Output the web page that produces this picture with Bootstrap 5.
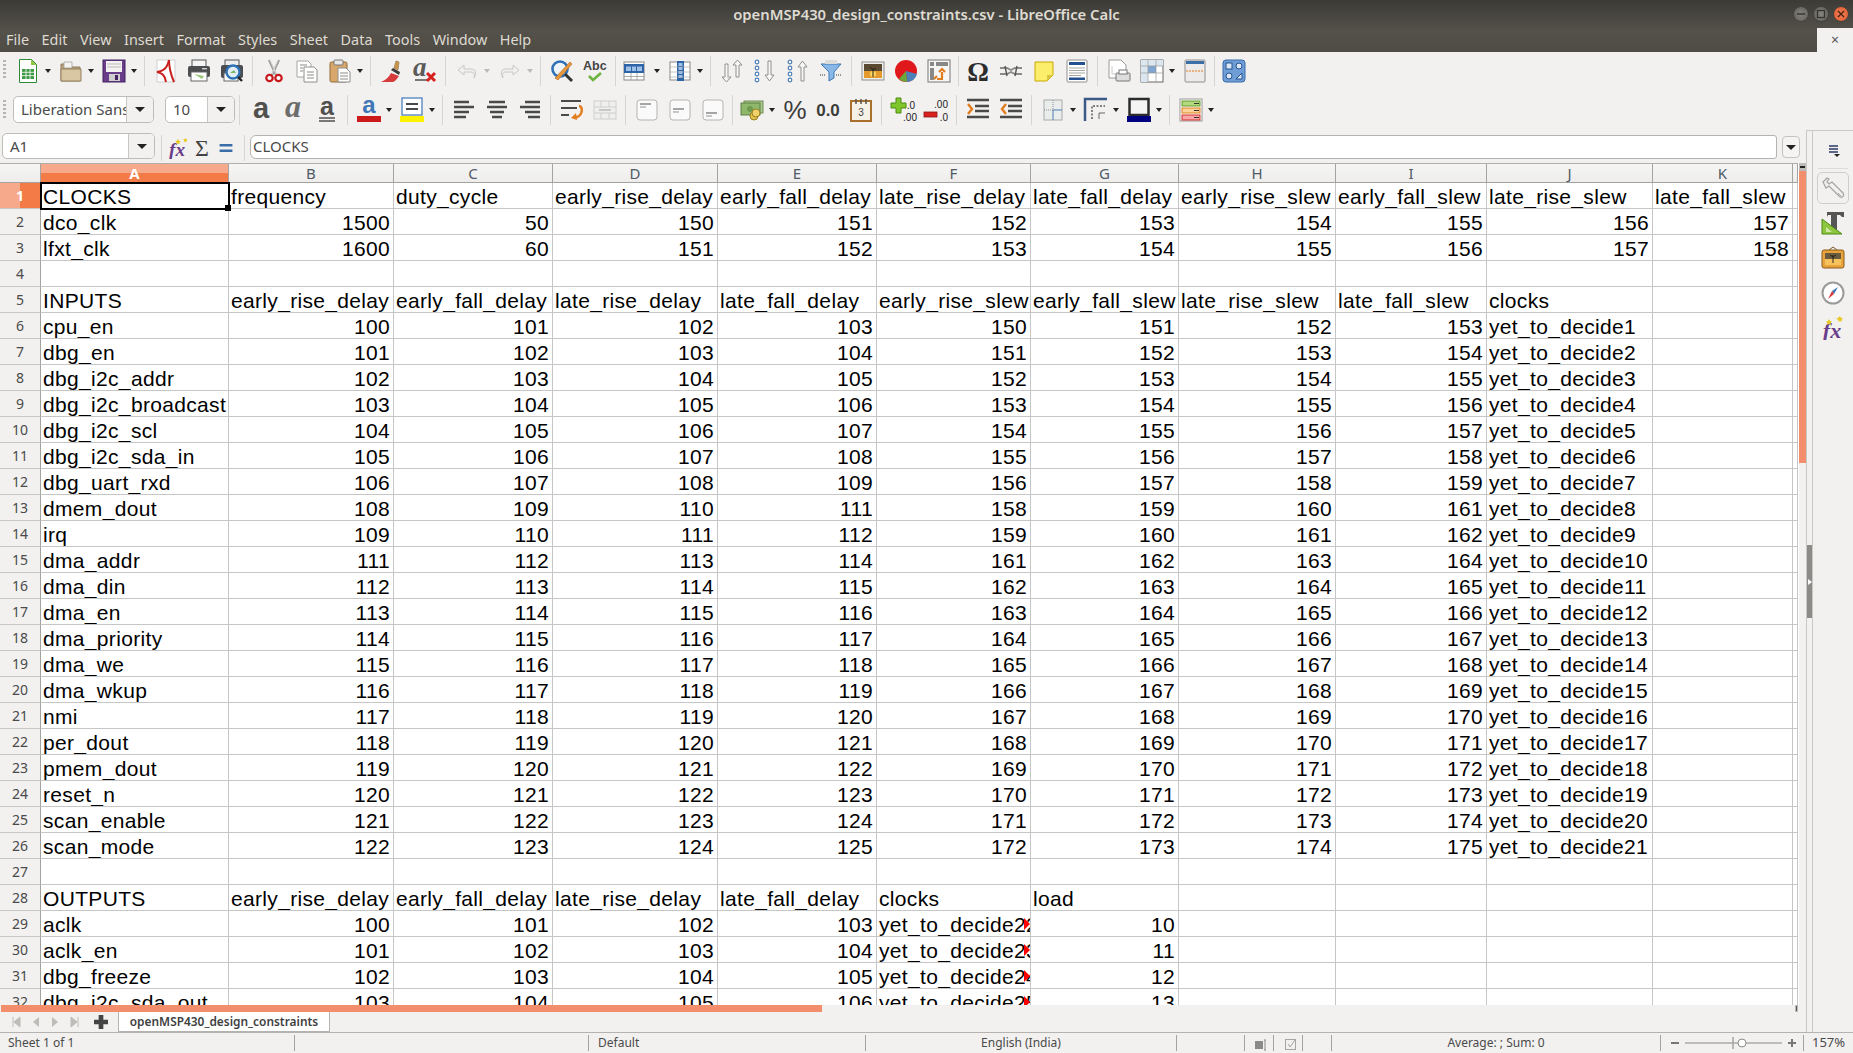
<!DOCTYPE html>
<html lang="en">
<head>
<meta charset="utf-8">
<title>openMSP430_design_constraints.csv - LibreOffice Calc</title>
<link href="https://cdn.jsdelivr.net/npm/bootstrap@5.3.0/dist/css/bootstrap.min.css" rel="stylesheet">
<style>
html,body{margin:0;height:100%;overflow:hidden;background:#f2f1f0;font-family:"Noto Sans",sans-serif}
.lo-app{width:1853px;height:1053px}
.lo-titlebar{height:52px;background:linear-gradient(#3c3b37,#54514a 60%,#4f4c45);position:relative;color:#dfdbd2}
.lo-title{font:600 14.8px/28px "Noto Sans",sans-serif;text-align:center}
.lo-winbtns{position:absolute;right:4px;top:6px;gap:4px}
.lo-wb{width:16px;height:16px;border-radius:50%;background:radial-gradient(#85837d,#5f5d58);border:1px solid #44423d}
.lo-wb.lo-close{background:radial-gradient(#f2825a,#e0562a)}
.lo-wb svg{display:block}
.lo-menu{height:24px;padding-left:6px;gap:12.6px;font-size:14.4px;line-height:24px;color:#dfdbd2}
.lo-menu span{white-space:nowrap}
.lo-docx{position:absolute;right:0;top:28px;width:36px;height:24px;background:#f2f1f0;color:#555;text-align:center;line-height:23px;font-size:14px}
.lo-tb1{height:37px;padding-left:11px}
.lo-tb2{height:41px}
.lo-grip{position:absolute;left:3px;width:3px;background:repeating-linear-gradient(#b5b5b2 0 2px,transparent 2px 4px)}
.lo-grip-a{top:8px;height:20px}
.lo-grip-b{top:48px;height:20px}
.lo-tbwrap{position:relative;height:78px}
.lo-b{width:33px;height:24px;flex:none;display:flex;align-items:center;justify-content:center}
.lo-b svg{width:24px;height:24px;display:block;overflow:visible}
.lo-a{width:10px;flex:none;display:flex;justify-content:center}
.lo-a::before{content:"";border:3.5px solid transparent;border-top:4px solid #222;border-bottom:0;margin-left:-2px}
.lo-a.lo-off::before{border-top-color:#bbb}
.lo-s{width:9px;height:30px;flex:none;position:relative}
.lo-s::before{content:"";position:absolute;left:4px;top:0;bottom:0;width:1px;background:#d6d5d2}
.lo-s.lo-n{width:6px}
.lo-s.lo-n::before{left:3px}
.lo-combo{height:27px;background:#fff;border:1px solid #bdbcb8;border-radius:5px;display:flex;flex:none;font-size:15px;color:#4a4a4a;line-height:25px;overflow:hidden}
.lo-combo .lo-txt{flex:1;padding-left:7px;white-space:nowrap;overflow:hidden}
.lo-combo .lo-dd{width:27px;background:#f2f1f0;border-left:1px solid #c8c7c3;display:flex;align-items:center;justify-content:center;flex:none}
.lo-combo .lo-dd::before,.lo-fbtn::before{content:"";border:5px solid transparent;border-top:5px solid #222;border-bottom:0}
.lo-font{width:141px;margin-left:13px;margin-right:11px}
.lo-size{width:70px}
.lo-main{height:902px}
.lo-left{width:1806px}
.lo-formula{height:33px}
.lo-name{width:153px;height:26px;margin:3px 0 0 2px}
.lo-name .lo-dd{width:26px}
.lo-fs{width:1px;height:26px;background:#d6d5d2;margin:5px 0 0 6px;flex:none}
.lo-fx{width:24px;height:24px;margin-top:6px;display:flex;align-items:center;justify-content:center;flex:none}
.lo-fx svg{width:22px;height:22px;display:block}
.lo-input{width:1527px;height:24px;margin:5px 0 0 5px;background:#fff;border:1px solid #b4b3af;border-radius:6px 3px 3px 6px;font-size:15px;line-height:21px;padding-left:2px;color:#4a4a4a;flex:none}
.lo-fbtn{width:18px;height:22px;margin:6px 0 0 5px;border:1px solid #c4c3bf;border-radius:4px;background:#f5f4f3;display:flex;align-items:center;justify-content:center;flex:none}
.lo-gridrow{height:849px}
.lo-gridwrap{width:1799px;height:842px;overflow:hidden;background:#fff}
.lo-sheet{table-layout:fixed;border-collapse:separate;border-spacing:0;width:1798px;font-family:"Liberation Sans",Arial,sans-serif;font-size:21px;letter-spacing:.33px;color:#000}
.lo-sheet td{height:26px;line-height:22px;padding:3px 2px 0;border-right:1px solid #c6c6c6;border-bottom:1px solid #c6c6c6;white-space:nowrap;overflow:hidden;position:relative;background:#fff}
.lo-sheet td.lo-r{text-align:right;padding-right:3px}
.lo-sheet thead th{height:20px;padding:0;background:linear-gradient(#f5f5f4,#eeedec);border-top:1px solid #b0afab;border-right:1px solid #a3a3a0;border-bottom:1px solid #a3a3a0;font:400 15px/18px "Noto Sans",sans-serif;letter-spacing:0;color:#4f5a66;text-align:center}
.lo-sheet tbody th{padding:0;background:#f2f1f0;border-right:1px solid #a3a3a0;border-bottom:1px solid #c6c6c6;font:400 14px/24px "Noto Sans",sans-serif;letter-spacing:0;color:#4a4a4a;text-align:center}
.lo-sheet thead th.lo-on{background:linear-gradient(#f6a98b 50%,#f27b48 50%);color:#fff;font-weight:700}
.lo-sheet tbody th.lo-on{background:linear-gradient(90deg,#f6a98b 50%,#f27b48 50%);color:#fff;font-weight:700}
.lo-sheet td.lo-cur{overflow:visible;outline:2px solid #000;outline-offset:-1px;z-index:2}
.lo-sheet td.lo-cur::after{content:"";position:absolute;right:-3px;bottom:-3px;width:6px;height:6px;background:#000;z-index:3}
.lo-sheet td.lo-ovf::after{content:"";position:absolute;right:0;top:7px;border:6px solid transparent;border-left:6px solid #f00;border-right:0}
.lo-vs{width:7px;flex:none}
.lo-vs-btn{height:8px;background:#bdbcb9;position:relative}
.lo-vs-btn::before{content:"";position:absolute;left:1px;right:1px;top:3px;height:2px;background:#222}
.lo-vs-thumb{height:292px;background:#f28e6b}
.lo-hs{height:7px;padding-left:1px;margin-top:-7px}
.lo-hs-thumb{width:821px;height:7px;background:#f28e6b}
.lo-hs-end{width:3px;height:7px;background:#555;margin-left:973px;border:1px solid #bbb}
.lo-tabs{height:20px}
.lo-nav{width:118px;padding-left:10px;align-items:center;flex:none}
.lo-nav svg{width:12px;height:12px;margin-right:7.5px;display:block;flex:none}
.lo-nav svg.lo-plus{width:14px;height:14px;margin-left:6px}
.lo-sheettab{width:212px;height:20px;background:#fff;border:1px solid #b4b3af;border-top:0;font:600 11.9px/18px "Noto Sans",sans-serif;color:#3f3f3f;text-align:center;white-space:nowrap;flex:none}
.lo-sash{width:7px;border-left:1px solid #c9c8c5;border-right:1px solid #c9c8c5;border-top:1px solid #c9c8c5;flex:none}
.lo-handle{height:73px;margin-top:414px;background:#8c8b87;display:flex;align-items:center;justify-content:center}
.lo-handle::before{content:"";border:3px solid transparent;border-left:4px solid #fff;border-right:0}
.lo-deck{width:40px;border-top:1px solid #c9c8c5;align-items:center;padding-top:13px;flex:none}
.lo-deck svg{display:block;width:24px;height:24px}
.lo-deck svg.lo-dk-menu{width:12px;height:14px;margin-left:1px}
.lo-dk-hr{width:30px;height:1px;background:#dcdbd8;margin:10px 0 3px}
.lo-dk-act{width:32px;height:32px;border:1px solid #cfcecb;border-radius:5px;display:flex;align-items:center;justify-content:center;margin-bottom:7px}
.lo-dk-i{height:35px;display:flex;align-items:flex-start;justify-content:center}
.lo-status{height:20px;border-top:1px solid #b4b3af;font-size:12px;color:#4a4a4a}
.lo-st{height:16px;margin-top:2px;border-right:1px solid #a3a3a0;flex:none;line-height:15px;white-space:nowrap;overflow:hidden}
.lo-w295{width:295px}.lo-w294{width:294px}.lo-w277{width:277px;padding-left:9px}.lo-w311{width:311px}.lo-w68{width:68px}
.lo-w29a{width:29px;padding:1px 0 0 9px}.lo-w29b{width:29px;padding:1px 0 0 11px}.lo-w329{width:329px}
.lo-slider{height:16px;margin-top:2px;padding-left:7px;flex:none;width:143px;border-right:1px solid #a3a3a0}
.lo-slider svg{display:block}
.lo-zoom{width:48px;padding-left:8px;font-size:13px;line-height:15px;margin-top:2px;height:16px}
</style>
</head>
<body>
<div class="lo-app d-flex flex-column">
<header class="lo-titlebar">
  <div class="lo-title">openMSP430_design_constraints.csv - LibreOffice Calc</div>
  <div class="lo-winbtns d-flex">
    <div class="lo-wb"><svg viewBox="0 0 14 14"><path d="M3 7h8" stroke="#33322e" stroke-width="1.4"/></svg></div>
    <div class="lo-wb"><svg viewBox="0 0 14 14"><rect x="3.5" y="3.5" width="7" height="7" fill="none" stroke="#33322e" stroke-width="1.2"/></svg></div>
    <div class="lo-wb lo-close"><svg viewBox="0 0 14 14"><path d="M4 4l6 6M10 4l-6 6" stroke="#4a2312" stroke-width="1.4"/></svg></div>
  </div>
  <nav class="lo-menu d-flex"><span>File</span><span>Edit</span><span>View</span><span>Insert</span><span>Format</span><span>Styles</span><span>Sheet</span><span>Data</span><span>Tools</span><span>Window</span><span>Help</span></nav>
  <div class="lo-docx">×</div>
</header>

<div class="lo-tbwrap">
<div class="lo-grip lo-grip-a"></div>
<div class="lo-grip lo-grip-b"></div>
<div class="lo-tb1 d-flex align-items-center">
  <div class="lo-b"><svg viewBox="0 0 24 24"><path d="M3.500.5h12l5 5v18h-17z" fill="#fff" stroke="#2f8a35"/><path d="M15 .5l5.500 5.500H15z" fill="#8cc63f"/><rect x="6" y="10" width="12" height="10" fill="#3f9a45"/><path d="M6 13.300h12M6 16.600h12M10 10v10M14 10v10" stroke="#fff" stroke-width=".8"/></svg></div><div class="lo-a"></div>
  <div class="lo-b"><svg viewBox="0 0 24 24"><path d="M2 5h8l2 3h9v14H2z" fill="#b9a27c" stroke="#8f7b5a"/><path d="M5 3h8v6H5z" fill="#f4f2ee" stroke="#9a9a96" stroke-width=".7"/><path d="M2 10h20v12H2z" fill="#d9c6a2" stroke="#93805f"/></svg></div><div class="lo-a"></div>
  <div class="lo-b"><svg viewBox="0 0 24 24"><rect x="1" y="1" width="22" height="22" fill="#6a3d8a" stroke="#432463"/><rect x="4" y="2" width="16" height="11" fill="#f3f2f0"/><path d="M5 5h14M5 8h14" stroke="#bbb"/><rect x="7" y="15" width="11" height="7" fill="#cfcdd0"/><rect x="13" y="16" width="3" height="5" fill="#432463"/></svg></div><div class="lo-a"></div>
  <div class="lo-s"></div>
  <div class="lo-b"><svg viewBox="0 0 24 24"><path d="M3 1h18v22H3z" fill="#fff" stroke="#cfcfcf"/><path d="M15 1C13 10 9 12 3 13c5 1 8 3 9 10" fill="none" stroke="#c8201f" stroke-width="2"/><path d="M15 1c0 8 2 15 5 22" fill="none" stroke="#c8201f" stroke-width="2"/></svg></div>
  <div class="lo-b"><svg viewBox="0 0 24 24"><rect x="5" y="1" width="14" height="7" fill="#f4f4f4" stroke="#555"/><rect x="1" y="7" width="22" height="11" rx="2" fill="#4b4d4f"/><rect x="4" y="13" width="16" height="9" fill="#fff" stroke="#666"/><path d="M7 15l8 5 2-3z" fill="#9ac57c"/><rect x="15" y="9" width="5" height="1.400" fill="#ccc"/></svg></div>
  <div class="lo-b"><svg viewBox="0 0 24 24"><rect x="5" y="1" width="14" height="6" fill="#eee" stroke="#555"/><rect x="1" y="6" width="22" height="13" rx="2" fill="#4b4d4f"/><rect x="4" y="14" width="14" height="8" fill="#fff" stroke="#666"/><circle cx="13" cy="13" r="6.500" fill="#e2eef6" stroke="#2d72b5" stroke-width="2.400"/><path d="M10 14l4-3 2 3z" fill="#7cb56a"/><path d="M18 18l4 4" stroke="#222" stroke-width="2.400"/></svg></div>
  <div class="lo-s"></div>
  <div class="lo-b"><svg viewBox="0 0 24 24"><path d="M7 1l7 15M17 1l-7 15" stroke="#9a9a98" stroke-width="2.200"/><path d="M8 1l6 14M16 1l-6 14" stroke="#e6e6e4" stroke-width=".8"/><circle cx="7.500" cy="19" r="3.200" fill="#fff" stroke="#c9181c" stroke-width="2.200"/><circle cx="16.500" cy="19" r="3.200" fill="#fff" stroke="#c9181c" stroke-width="2.200"/></svg></div>
  <div class="lo-b"><svg viewBox="0 0 24 24"><path d="M2 2h11l3 3v13H2z" fill="#fff" stroke="#a5a5a3"/><path d="M9 8h10l3 3v12H9z" fill="#fff" stroke="#8e8e8c"/><path d="M5 6h7M5 9h3M5 12h3M12 13h7M12 16h7M12 19h7" stroke="#8a8a88"/></svg></div>
  <div class="lo-b"><svg viewBox="0 0 24 24"><rect x="2" y="3" width="17" height="20" rx="1.500" fill="#d9a76a" stroke="#8f6a37"/><rect x="6" y="1" width="9" height="5" rx="1" fill="#e9e8e5" stroke="#777"/><path d="M10 9h8l4 4v10H10z" fill="#fff" stroke="#8e8e8c"/><path d="M12 14h8M12 17h8M12 20h8" stroke="#8a8a88"/></svg></div><div class="lo-a"></div>
  <div class="lo-s"></div>
  <div class="lo-b"><svg viewBox="0 0 24 24"><path d="M1 23c5-2 8-5 10-9l8 3c-2 2-3 5-6 6z" fill="#d63a3a"/><path d="M11 11l8 5 1-3-7-4z" fill="#3c3c3a"/><path d="M14 9l2-7 3 1-1 8z" fill="#c9964b" stroke="#8f6a37" stroke-width=".6"/></svg></div>
  <div class="lo-b"><svg viewBox="0 0 24 24"><text x="0" y="17" font-family="'Liberation Serif',serif" font-style="italic" font-weight="700" font-size="27" fill="#5a5a58">a</text><path d="M2 21h14" stroke="#5a5a58" stroke-width="1.600"/><path d="M14 14l8 8M22 14l-8 8" stroke="#d61f1f" stroke-width="3"/></svg></div>
  <div class="lo-s"></div>
  <div class="lo-b"><svg viewBox="0 0 24 24"><path d="M9 6L3 11l6 5v-3h7c3 0 4 2 3 6 3-5 2-9-3-9H9z" fill="#f1f0ee" stroke="#c9c8c5"/></svg></div><div class="lo-a lo-off"></div>
  <div class="lo-b"><svg viewBox="0 0 24 24"><path d="M15 6l6 5-6 5v-3H8c-3 0-4 2-3 6-3-5-2-9 3-9h7z" fill="#f1f0ee" stroke="#c9c8c5"/></svg></div><div class="lo-a lo-off"></div>
  <div class="lo-s"></div>
  <div class="lo-b"><svg viewBox="0 0 24 24"><circle cx="10" cy="10" r="7.500" fill="#eef3f8" stroke="#2e6fb5" stroke-width="2.600"/><path d="M15 15l7 7" stroke="#333" stroke-width="3"/><path d="M5 19L20 3l2 2L8 21z" fill="#e8973a" stroke="#a8641c" stroke-width=".6"/></svg></div>
  <div class="lo-b"><svg viewBox="0 0 24 24"><text x="0" y="11" font-family="'Liberation Sans',sans-serif" font-weight="700" font-size="12.500" fill="#444">Abc</text><path d="M6 17l4 4 8-7" fill="none" stroke="#6cb33f" stroke-width="2.600"/></svg></div>
  <div class="lo-s"></div>
  <div class="lo-b"><svg viewBox="0 0 24 24"><rect x="-1" y="3" width="20" height="18" fill="#fff" stroke="#888"/><rect x="-1" y="5" width="20" height="9" fill="#2f63a7"/><path d="M1 7.500h5V12H1zM7 7.500h4V12H7zM12 7.500h5V12h-5z" fill="#9cc0e6"/><path d="M-1 17.500h20M6 14v7M12 14v7" stroke="#999" stroke-width=".8"/></svg></div><div class="lo-a"></div>
  <div class="lo-b"><svg viewBox="0 0 24 24"><rect x="2" y="3" width="20" height="18" fill="#fff" stroke="#888"/><rect x="9" y="2" width="7" height="20" fill="#2f63a7"/><path d="M10.500 4h4v3h-4zM10.500 8h4v3h-4zM10.500 12h4v3h-4zM10.500 16h4v3h-4z" fill="#9cc0e6"/><path d="M2 8h20M2 13h20M2 18h20" stroke="#aaa" stroke-width=".7"/></svg></div><div class="lo-a"></div>
  <div class="lo-s"></div>
  <div class="lo-b"><svg viewBox="0 0 24 24"><path d="M5 5h3v13h3l-4.500 5L2 18h3zM16 18h3V6h3l-4.500-5L13 6h3z" fill="#f7f7f6" stroke="#8f8f8d"/><path d="M8 6v14" stroke="#ccc"/></svg></div>
  <div class="lo-b"><svg viewBox="0 0 24 24"><g fill="#fff" stroke="#4d7fb8" stroke-width="1.200"><circle cx="4" cy="3" r="1.800"/><circle cx="4" cy="9" r="1.800"/><circle cx="4" cy="15" r="1.800"/><circle cx="4" cy="21" r="1.800"/></g><path d="M15 2h3v14h3l-4.500 6L12 16h3z" fill="#f7f7f6" stroke="#8f8f8d"/></svg></div>
  <div class="lo-b"><svg viewBox="0 0 24 24"><g fill="#fff" stroke="#4d7fb8" stroke-width="1.200"><circle cx="4" cy="3" r="1.800"/><circle cx="4" cy="9" r="1.800"/><circle cx="4" cy="15" r="1.800"/><circle cx="4" cy="21" r="1.800"/></g><path d="M15 22h3V8h3l-4.500-6L12 8h3z" fill="#f7f7f6" stroke="#8f8f8d"/></svg></div>
  <div class="lo-b"><svg viewBox="0 0 24 24"><path d="M2 5h20l-7 8v6l-5 3v-9z" fill="#8ab8e6" stroke="#3c77b8"/><path d="M6 1h12v4H6z" fill="#dcdcdb"/><path d="M1 16h6M17 16h6" stroke="#333" stroke-dasharray="1 1"/></svg></div>
  <div class="lo-s"></div>
  <div class="lo-b"><svg viewBox="0 0 24 24"><rect x="1" y="3" width="22" height="18" fill="#eee" stroke="#8f8f8d"/><rect x="3" y="5" width="18" height="14" fill="#e59a2e"/><rect x="3" y="5" width="18" height="7" fill="#5a4a32"/><circle cx="12" cy="15" r="3" fill="#fbd65e"/><path d="M12 18V9M12 11l-3-3M12 12l3-3" stroke="#2d2418"/></svg></div>
  <div class="lo-b"><svg viewBox="0 0 24 24"><circle cx="12" cy="12" r="11" fill="#e0181c"/><path d="M12 12l11 3a11 11 0 0 1-10 8z" fill="#4d7fb8"/><path d="M12 12l1 11a11 11 0 0 1-8-3z" fill="#69a83a"/></svg></div>
  <div class="lo-b"><svg viewBox="0 0 24 24"><rect x="1" y="1" width="22" height="22" fill="#f6f6f5" stroke="#777"/><rect x="3" y="3" width="4" height="4" fill="#888"/><rect x="9" y="3" width="12" height="4" fill="#888"/><rect x="3" y="9" width="4" height="12" fill="#888"/><path d="M10 20h5v-7M12 13l3-3 3 3M10 17l-3 3" fill="none" stroke="#e27d1e" stroke-width="2.200"/></svg></div>
  <div class="lo-s lo-n"></div>
  <div class="lo-b"><svg viewBox="0 0 24 24"><text x="12" y="22" text-anchor="middle" font-family="'Liberation Serif',serif" font-weight="700" font-size="27" fill="#2c2c2c">Ω</text></svg></div>
  <div class="lo-b"><svg viewBox="0 0 24 24"><path d="M1 9h7l4 2 4-2h7M1 15h7l4-2 4 2h7" fill="none" stroke="#8a8a88" stroke-width="1.800"/><path d="M6 7l2 10M18 7l-2 10" stroke="#555" stroke-width="1.400"/></svg></div>
  <div class="lo-b"><svg viewBox="0 0 24 24"><path d="M3 3h18v13l-6 6H3z" fill="#fbee6a" stroke="#c9a800"/><path d="M21 16h-6v6z" fill="#d9c63c"/></svg></div>
  <div class="lo-b"><svg viewBox="0 0 24 24"><rect x="2" y="1" width="20" height="22" rx="1" fill="#fff" stroke="#8f8f8d"/><rect x="4" y="3" width="16" height="3" fill="#23508f"/><path d="M4 9h16M4 11.500h16M4 14h16M4 16.500h12" stroke="#a5a5a3"/><rect x="4" y="18.500" width="16" height="2.500" fill="#23508f"/></svg></div>
  <div class="lo-s"></div>
  <div class="lo-b"><svg viewBox="0 0 24 24"><path d="M2 1h12l5 5v13H2z" fill="#fff" stroke="#9a9a98"/><path d="M5 7v8h6" fill="none" stroke="#ccc"/><rect x="9" y="14" width="14" height="8" rx="1" fill="#ddd" stroke="#777"/><rect x="12" y="11" width="8" height="4" fill="#fff" stroke="#777"/></svg></div>
  <div class="lo-b"><svg viewBox="0 0 24 24"><rect x="1" y="1" width="22" height="22" fill="#fff" stroke="#666"/><path d="M1 1h22v6H1zM1 7h7v16H1z" fill="#dbe6f0"/><rect x="8" y="7" width="8" height="7" fill="#7fa6d2"/><path d="M8 1v22M16 1v22M1 7h22M1 14h22" stroke="#9a9a98" stroke-width=".7"/></svg></div><div class="lo-a"></div>
  <div class="lo-b"><svg viewBox="0 0 24 24"><rect x="2" y="1" width="20" height="22" rx="1" fill="#eceaea" stroke="#8f8f8d"/><rect x="3" y="2" width="18" height="3" fill="#3c6ea8"/><path d="M3 12h18" stroke="#e27d1e" stroke-dasharray="2 1"/></svg></div>
  <div class="lo-s lo-n"></div>
  <div class="lo-b"><svg viewBox="0 0 24 24"><rect x="1" y="1" width="22" height="22" rx="3" fill="#6f9ed6" stroke="#386aa8"/><rect x="4" y="4" width="6" height="6" fill="#dbe7f5" stroke="#23508f"/><circle cx="17" cy="7" r="3" fill="#dbe7f5" stroke="#23508f"/><circle cx="7" cy="17" r="3" fill="#dbe7f5" stroke="#23508f"/><path d="M14 20l6-6v6z" fill="#dbe7f5" stroke="#23508f"/></svg></div>
</div>

<div class="lo-tb2 d-flex align-items-center">
  <div class="lo-combo lo-font"><div class="lo-txt">Liberation Sans</div><div class="lo-dd"></div></div>
  <div class="lo-combo lo-size"><div class="lo-txt">10</div><div class="lo-dd"></div></div>
  <div class="lo-s"></div>
  <div class="lo-b"><svg viewBox="0 0 24 24"><text x="12" y="20" text-anchor="middle" font-family="'Liberation Sans',sans-serif" font-weight="700" font-size="29" fill="#50504e">a</text></svg></div>
  <div class="lo-b"><svg viewBox="0 0 24 24"><text x="11" y="19" text-anchor="middle" font-family="'Liberation Serif',serif" font-style="italic" font-weight="700" font-size="32" fill="#6c6c6a">a</text></svg></div>
  <div class="lo-b"><svg viewBox="0 0 24 24"><text x="12" y="17" text-anchor="middle" font-family="'Liberation Sans',sans-serif" font-weight="700" font-size="25" fill="#50504e">a</text><path d="M4 20h16M4 23h16" stroke="#50504e" stroke-width="1.500"/></svg></div>
  <div class="lo-s"></div>
  <div class="lo-b"><svg viewBox="0 0 24 24"><text x="12" y="15" text-anchor="middle" font-family="'Liberation Sans',sans-serif" font-weight="700" font-size="24" fill="#3f76b8">a</text><rect x="0" y="18" width="24" height="6" fill="#cc1a1a"/></svg></div><div class="lo-a"></div>
  <div class="lo-b"><svg viewBox="0 0 24 24"><rect x="2" y="0" width="20" height="17" fill="#fff" stroke="#3f76b8" stroke-width="1.200"/><path d="M6 6h12M6 11h12" stroke="#4a4a48" stroke-width="2"/><rect x="0" y="18" width="24" height="6" fill="#fff200"/></svg></div><div class="lo-a"></div>
  <div class="lo-s"></div>
  <div class="lo-b"><svg viewBox="0 0 24 24"><path d="M2 4h15M2 9h20M2 14h15M2 19h12" stroke="#4a4a48" stroke-width="2.400"/></svg></div>
  <div class="lo-b"><svg viewBox="0 0 24 24"><path d="M4 4h16M2 9h20M5 14h14M7 19h10" stroke="#4a4a48" stroke-width="2.400"/></svg></div>
  <div class="lo-b"><svg viewBox="0 0 24 24"><path d="M7 4h15M2 9h20M7 14h15M10 19h12" stroke="#4a4a48" stroke-width="2.400"/></svg></div>
  <div class="lo-s"></div>
  <div class="lo-b"><svg viewBox="0 0 24 24"><path d="M1 3h20M1 10h16M1 17h8" stroke="#4a4a48" stroke-width="2"/><path d="M19 8c4 0 4 9-2 11l-3 1" fill="none" stroke="#e27d1e" stroke-width="2.500"/><path d="M16 15l-5 5 6 2z" fill="#e27d1e"/></svg></div>
  <div class="lo-b"><svg viewBox="0 0 24 24"><rect x="1" y="3" width="22" height="18" fill="#efefee" stroke="#cfcfcd"/><path d="M1 9h22M1 15h22M8 3v6M16 3v6M8 15v6M16 15v6" stroke="#cfcfcd"/><path d="M6 12h12" stroke="#bbb" stroke-width="1.500"/></svg></div>
  <div class="lo-s"></div>
  <div class="lo-b"><svg viewBox="0 0 24 24"><rect x="2" y="2" width="20" height="20" rx="3" fill="#fafafa" stroke="#b5b4b1"/><path d="M5 6h11" stroke="#777" stroke-width="1.300"/><path d="M5 9h6" stroke="#aaa" stroke-width="1.300"/></svg></div>
  <div class="lo-b"><svg viewBox="0 0 24 24"><rect x="2" y="2" width="20" height="20" rx="3" fill="#fafafa" stroke="#b5b4b1"/><path d="M5 11h11" stroke="#777" stroke-width="1.300"/><path d="M5 14h6" stroke="#aaa" stroke-width="1.300"/></svg></div>
  <div class="lo-b"><svg viewBox="0 0 24 24"><rect x="2" y="2" width="20" height="20" rx="3" fill="#fafafa" stroke="#b5b4b1"/><path d="M5 15h11" stroke="#777" stroke-width="1.300"/><path d="M5 18h6" stroke="#aaa" stroke-width="1.300"/></svg></div>
  <div class="lo-s lo-n"></div>
  <div class="lo-b"><svg viewBox="0 0 24 24"><rect x="4" y="3" width="19" height="12" fill="#a9c98d" stroke="#6f8e55"/><rect x="1" y="5" width="19" height="12" fill="#8fb86d" stroke="#5f7f45"/><circle cx="10" cy="11" r="3" fill="#6f9a4d"/><circle cx="14" cy="18" r="4" fill="#e3c24d" stroke="#9c7f1f"/><circle cx="16" cy="15" r="4" fill="#efd26b" stroke="#9c7f1f"/></svg></div><div class="lo-a"></div>
  <div class="lo-b"><svg viewBox="0 0 24 24"><text x="12" y="21" text-anchor="middle" font-family="'Liberation Sans',sans-serif" font-size="26" fill="#3c3c3a">%</text></svg></div>
  <div class="lo-b"><svg viewBox="0 0 24 24"><text x="12" y="18" text-anchor="middle" font-family="'Liberation Sans',sans-serif" font-weight="700" font-size="17" fill="#3c3c3a">0.0</text></svg></div>
  <div class="lo-b"><svg viewBox="0 0 24 24"><rect x="2" y="3" width="20" height="20" fill="#f5f1e6" stroke="#a8702a" stroke-width="2"/><path d="M7 1v5M12 1v5M17 1v5" stroke="#555" stroke-width="1.500"/><text x="12" y="18" text-anchor="middle" font-family="'Liberation Sans',sans-serif" font-size="10" fill="#444">3</text></svg></div>
  <div class="lo-s"></div>
  <div class="lo-b"><svg viewBox="0 0 24 24"><path d="M5 0h5v5h5v5h-5v5H5v-5H0V5h5z" fill="#7ec62a" stroke="#4f8a13"/><text x="24" y="11" text-anchor="end" font-family="'Liberation Sans',sans-serif" font-size="10" fill="#222">.0</text><text x="26" y="23" text-anchor="end" font-family="'Liberation Sans',sans-serif" font-size="10" fill="#222">.00</text></svg></div>
  <div class="lo-b"><svg viewBox="0 0 24 24"><rect x="0" y="14" width="13" height="5" fill="#d8201f" stroke="#8f1515" stroke-width=".8"/><text x="24" y="10" text-anchor="end" font-family="'Liberation Sans',sans-serif" font-size="10" fill="#222">.00</text><text x="24" y="23" text-anchor="end" font-family="'Liberation Sans',sans-serif" font-size="10" fill="#222">.0</text></svg></div>
  <div class="lo-s"></div>
  <div class="lo-b"><svg viewBox="0 0 24 24"><path d="M1 2h22M9 8h14M9 13h14M1 19h22" stroke="#4a4a48" stroke-width="2.400"/><path d="M2 6l4 5-4 5" fill="none" stroke="#e27d1e" stroke-width="2.400"/></svg></div>
  <div class="lo-b"><svg viewBox="0 0 24 24"><path d="M1 2h22M9 8h14M9 13h14M1 19h22" stroke="#4a4a48" stroke-width="2.400"/><path d="M7 6l-4 5 4 5" fill="none" stroke="#e27d1e" stroke-width="2.400"/></svg></div>
  <div class="lo-s"></div>
  <div class="lo-b"><svg viewBox="0 0 24 24"><rect x="3" y="2" width="18" height="20" fill="#e9eeec" stroke="#aaa"/><path d="M3 12h9M12 2v10" stroke="#8f8f8d" stroke-dasharray="1 1"/><path d="M12 12h9M12 12v10" stroke="#4d7fb8"/></svg></div><div class="lo-a"></div>
  <div class="lo-b"><svg viewBox="0 0 24 24"><path d="M1 23V1h22" fill="none" stroke="#3b5a85" stroke-width="2.500"/><path d="M8 21V8h13" fill="none" stroke="#111" stroke-dasharray="2 1.500"/><path d="M15 21v-6h6" fill="none" stroke="#666"/></svg></div><div class="lo-a"></div>
  <div class="lo-b"><svg viewBox="0 0 24 24"><rect x="2.500" y="1" width="19" height="16" fill="#f5f5f4" stroke="#2c2c2c" stroke-width="2.500"/><rect x="0" y="18" width="24" height="6" fill="#000080"/></svg></div><div class="lo-a"></div>
  <div class="lo-s"></div>
  <div class="lo-b"><svg viewBox="0 0 24 24"><rect x="1" y="1" width="22" height="22" fill="#fff" stroke="#9a9a98"/><rect x="3" y="3" width="18" height="5" fill="#b5d97e" stroke="#5f9a2a"/><rect x="3" y="10" width="18" height="5" fill="#fbd39a" stroke="#e0821e"/><rect x="3" y="17" width="18" height="5" fill="#f7a7a7" stroke="#d43030"/><path d="M15 5.500h5M15 12.500h5M15 19.500h5" stroke="#333"/></svg></div><div class="lo-a"></div>
</div>
</div>

<div class="lo-main d-flex">
<div class="lo-left d-flex flex-column">
  <div class="lo-formula d-flex">
    <div class="lo-combo lo-name"><div class="lo-txt">A1</div><div class="lo-dd"></div></div>
    <div class="lo-fs"></div>
    <div class="lo-fx ms-1"><svg viewBox="0 0 24 24"><text x="11" y="21" text-anchor="middle" font-family="'Liberation Serif',serif" font-style="italic" font-weight="700" font-size="21" fill="#6a3d8a">fx</text><path d="M12 2l1 2 2 .5-1.500 1.500.3 2-1.800-1-1.800 1 .3-2L9 4.500l2-.5zM20 1l.8 1.500 1.700.3-1.200 1.200.2 1.700-1.500-.8-1.500.8.2-1.700-1.200-1.200 1.700-.3z" fill="#e8c81e"/></svg></div>
    <div class="lo-fx"><svg viewBox="0 0 24 24"><text x="12" y="21" text-anchor="middle" font-family="'Liberation Serif',serif" font-size="26" fill="#444">Σ</text></svg></div>
    <div class="lo-fx"><svg viewBox="0 0 24 24"><path d="M5 9h14M5 15h14" stroke="#3a6ea8" stroke-width="2.800"/></svg></div>
    <div class="lo-fs"></div>
    <div class="lo-input">CLOCKS</div>
    <div class="lo-fbtn"></div>
  </div>
  <div class="lo-gridrow d-flex">
    <div class="lo-gridwrap">
<table class="lo-sheet">
<colgroup><col style="width:41px"><col style="width:188px"><col style="width:165px"><col style="width:159px"><col style="width:165px"><col style="width:159px"><col style="width:154px"><col style="width:148px"><col style="width:157px"><col style="width:151px"><col style="width:166px"><col style="width:140px"><col style="width:5px"></colgroup>
<thead><tr><th></th><th class="lo-on">A</th><th>B</th><th>C</th><th>D</th><th>E</th><th>F</th><th>G</th><th>H</th><th>I</th><th>J</th><th>K</th><th></th></tr></thead>
<tbody>
<tr><th class="lo-on">1</th><td class="lo-cur">CLOCKS</td><td>frequency</td><td>duty_cycle</td><td>early_rise_delay</td><td>early_fall_delay</td><td>late_rise_delay</td><td>late_fall_delay</td><td>early_rise_slew</td><td>early_fall_slew</td><td>late_rise_slew</td><td>late_fall_slew</td><td></td></tr>
<tr><th>2</th><td>dco_clk</td><td class="lo-r">1500</td><td class="lo-r">50</td><td class="lo-r">150</td><td class="lo-r">151</td><td class="lo-r">152</td><td class="lo-r">153</td><td class="lo-r">154</td><td class="lo-r">155</td><td class="lo-r">156</td><td class="lo-r">157</td><td></td></tr>
<tr><th>3</th><td>lfxt_clk</td><td class="lo-r">1600</td><td class="lo-r">60</td><td class="lo-r">151</td><td class="lo-r">152</td><td class="lo-r">153</td><td class="lo-r">154</td><td class="lo-r">155</td><td class="lo-r">156</td><td class="lo-r">157</td><td class="lo-r">158</td><td></td></tr>
<tr><th>4</th><td></td><td></td><td></td><td></td><td></td><td></td><td></td><td></td><td></td><td></td><td></td><td></td></tr>
<tr><th>5</th><td>INPUTS</td><td>early_rise_delay</td><td>early_fall_delay</td><td>late_rise_delay</td><td>late_fall_delay</td><td>early_rise_slew</td><td>early_fall_slew</td><td>late_rise_slew</td><td>late_fall_slew</td><td>clocks</td><td></td><td></td></tr>
<tr><th>6</th><td>cpu_en</td><td class="lo-r">100</td><td class="lo-r">101</td><td class="lo-r">102</td><td class="lo-r">103</td><td class="lo-r">150</td><td class="lo-r">151</td><td class="lo-r">152</td><td class="lo-r">153</td><td>yet_to_decide1</td><td></td><td></td></tr>
<tr><th>7</th><td>dbg_en</td><td class="lo-r">101</td><td class="lo-r">102</td><td class="lo-r">103</td><td class="lo-r">104</td><td class="lo-r">151</td><td class="lo-r">152</td><td class="lo-r">153</td><td class="lo-r">154</td><td>yet_to_decide2</td><td></td><td></td></tr>
<tr><th>8</th><td>dbg_i2c_addr</td><td class="lo-r">102</td><td class="lo-r">103</td><td class="lo-r">104</td><td class="lo-r">105</td><td class="lo-r">152</td><td class="lo-r">153</td><td class="lo-r">154</td><td class="lo-r">155</td><td>yet_to_decide3</td><td></td><td></td></tr>
<tr><th>9</th><td>dbg_i2c_broadcast</td><td class="lo-r">103</td><td class="lo-r">104</td><td class="lo-r">105</td><td class="lo-r">106</td><td class="lo-r">153</td><td class="lo-r">154</td><td class="lo-r">155</td><td class="lo-r">156</td><td>yet_to_decide4</td><td></td><td></td></tr>
<tr><th>10</th><td>dbg_i2c_scl</td><td class="lo-r">104</td><td class="lo-r">105</td><td class="lo-r">106</td><td class="lo-r">107</td><td class="lo-r">154</td><td class="lo-r">155</td><td class="lo-r">156</td><td class="lo-r">157</td><td>yet_to_decide5</td><td></td><td></td></tr>
<tr><th>11</th><td>dbg_i2c_sda_in</td><td class="lo-r">105</td><td class="lo-r">106</td><td class="lo-r">107</td><td class="lo-r">108</td><td class="lo-r">155</td><td class="lo-r">156</td><td class="lo-r">157</td><td class="lo-r">158</td><td>yet_to_decide6</td><td></td><td></td></tr>
<tr><th>12</th><td>dbg_uart_rxd</td><td class="lo-r">106</td><td class="lo-r">107</td><td class="lo-r">108</td><td class="lo-r">109</td><td class="lo-r">156</td><td class="lo-r">157</td><td class="lo-r">158</td><td class="lo-r">159</td><td>yet_to_decide7</td><td></td><td></td></tr>
<tr><th>13</th><td>dmem_dout</td><td class="lo-r">108</td><td class="lo-r">109</td><td class="lo-r">110</td><td class="lo-r">111</td><td class="lo-r">158</td><td class="lo-r">159</td><td class="lo-r">160</td><td class="lo-r">161</td><td>yet_to_decide8</td><td></td><td></td></tr>
<tr><th>14</th><td>irq</td><td class="lo-r">109</td><td class="lo-r">110</td><td class="lo-r">111</td><td class="lo-r">112</td><td class="lo-r">159</td><td class="lo-r">160</td><td class="lo-r">161</td><td class="lo-r">162</td><td>yet_to_decide9</td><td></td><td></td></tr>
<tr><th>15</th><td>dma_addr</td><td class="lo-r">111</td><td class="lo-r">112</td><td class="lo-r">113</td><td class="lo-r">114</td><td class="lo-r">161</td><td class="lo-r">162</td><td class="lo-r">163</td><td class="lo-r">164</td><td>yet_to_decide10</td><td></td><td></td></tr>
<tr><th>16</th><td>dma_din</td><td class="lo-r">112</td><td class="lo-r">113</td><td class="lo-r">114</td><td class="lo-r">115</td><td class="lo-r">162</td><td class="lo-r">163</td><td class="lo-r">164</td><td class="lo-r">165</td><td>yet_to_decide11</td><td></td><td></td></tr>
<tr><th>17</th><td>dma_en</td><td class="lo-r">113</td><td class="lo-r">114</td><td class="lo-r">115</td><td class="lo-r">116</td><td class="lo-r">163</td><td class="lo-r">164</td><td class="lo-r">165</td><td class="lo-r">166</td><td>yet_to_decide12</td><td></td><td></td></tr>
<tr><th>18</th><td>dma_priority</td><td class="lo-r">114</td><td class="lo-r">115</td><td class="lo-r">116</td><td class="lo-r">117</td><td class="lo-r">164</td><td class="lo-r">165</td><td class="lo-r">166</td><td class="lo-r">167</td><td>yet_to_decide13</td><td></td><td></td></tr>
<tr><th>19</th><td>dma_we</td><td class="lo-r">115</td><td class="lo-r">116</td><td class="lo-r">117</td><td class="lo-r">118</td><td class="lo-r">165</td><td class="lo-r">166</td><td class="lo-r">167</td><td class="lo-r">168</td><td>yet_to_decide14</td><td></td><td></td></tr>
<tr><th>20</th><td>dma_wkup</td><td class="lo-r">116</td><td class="lo-r">117</td><td class="lo-r">118</td><td class="lo-r">119</td><td class="lo-r">166</td><td class="lo-r">167</td><td class="lo-r">168</td><td class="lo-r">169</td><td>yet_to_decide15</td><td></td><td></td></tr>
<tr><th>21</th><td>nmi</td><td class="lo-r">117</td><td class="lo-r">118</td><td class="lo-r">119</td><td class="lo-r">120</td><td class="lo-r">167</td><td class="lo-r">168</td><td class="lo-r">169</td><td class="lo-r">170</td><td>yet_to_decide16</td><td></td><td></td></tr>
<tr><th>22</th><td>per_dout</td><td class="lo-r">118</td><td class="lo-r">119</td><td class="lo-r">120</td><td class="lo-r">121</td><td class="lo-r">168</td><td class="lo-r">169</td><td class="lo-r">170</td><td class="lo-r">171</td><td>yet_to_decide17</td><td></td><td></td></tr>
<tr><th>23</th><td>pmem_dout</td><td class="lo-r">119</td><td class="lo-r">120</td><td class="lo-r">121</td><td class="lo-r">122</td><td class="lo-r">169</td><td class="lo-r">170</td><td class="lo-r">171</td><td class="lo-r">172</td><td>yet_to_decide18</td><td></td><td></td></tr>
<tr><th>24</th><td>reset_n</td><td class="lo-r">120</td><td class="lo-r">121</td><td class="lo-r">122</td><td class="lo-r">123</td><td class="lo-r">170</td><td class="lo-r">171</td><td class="lo-r">172</td><td class="lo-r">173</td><td>yet_to_decide19</td><td></td><td></td></tr>
<tr><th>25</th><td>scan_enable</td><td class="lo-r">121</td><td class="lo-r">122</td><td class="lo-r">123</td><td class="lo-r">124</td><td class="lo-r">171</td><td class="lo-r">172</td><td class="lo-r">173</td><td class="lo-r">174</td><td>yet_to_decide20</td><td></td><td></td></tr>
<tr><th>26</th><td>scan_mode</td><td class="lo-r">122</td><td class="lo-r">123</td><td class="lo-r">124</td><td class="lo-r">125</td><td class="lo-r">172</td><td class="lo-r">173</td><td class="lo-r">174</td><td class="lo-r">175</td><td>yet_to_decide21</td><td></td><td></td></tr>
<tr><th>27</th><td></td><td></td><td></td><td></td><td></td><td></td><td></td><td></td><td></td><td></td><td></td><td></td></tr>
<tr><th>28</th><td>OUTPUTS</td><td>early_rise_delay</td><td>early_fall_delay</td><td>late_rise_delay</td><td>late_fall_delay</td><td>clocks</td><td>load</td><td></td><td></td><td></td><td></td><td></td></tr>
<tr><th>29</th><td>aclk</td><td class="lo-r">100</td><td class="lo-r">101</td><td class="lo-r">102</td><td class="lo-r">103</td><td class="lo-ovf">yet_to_decide22</td><td class="lo-r">10</td><td></td><td></td><td></td><td></td><td></td></tr>
<tr><th>30</th><td>aclk_en</td><td class="lo-r">101</td><td class="lo-r">102</td><td class="lo-r">103</td><td class="lo-r">104</td><td class="lo-ovf">yet_to_decide23</td><td class="lo-r">11</td><td></td><td></td><td></td><td></td><td></td></tr>
<tr><th>31</th><td>dbg_freeze</td><td class="lo-r">102</td><td class="lo-r">103</td><td class="lo-r">104</td><td class="lo-r">105</td><td class="lo-ovf">yet_to_decide24</td><td class="lo-r">12</td><td></td><td></td><td></td><td></td><td></td></tr>
<tr><th>32</th><td>dbg_i2c_sda_out</td><td class="lo-r">103</td><td class="lo-r">104</td><td class="lo-r">105</td><td class="lo-r">106</td><td class="lo-ovf">yet_to_decide25</td><td class="lo-r">13</td><td></td><td></td><td></td><td></td><td></td></tr>
</tbody>
</table>
    </div>
    <div class="lo-vs d-flex flex-column"><div class="lo-vs-btn"></div><div class="lo-vs-thumb"></div></div>
  </div>
  <div class="lo-hs d-flex"><div class="lo-hs-thumb"></div><div class="lo-hs-end"></div></div>
  <div class="lo-tabs d-flex">
    <div class="lo-nav d-flex">
      <svg viewBox="0 0 12 12"><path d="M3 1v10M10 1L4 6l6 5z" fill="#bdbcb9" stroke="#bdbcb9"/></svg>
      <svg viewBox="0 0 12 12"><path d="M9 1L3 6l6 5z" fill="#bdbcb9"/></svg>
      <svg viewBox="0 0 12 12"><path d="M3 1l6 5-6 5z" fill="#bdbcb9"/></svg>
      <svg viewBox="0 0 12 12"><path d="M9 1v10M2 1l6 5-6 5z" fill="#bdbcb9" stroke="#bdbcb9"/></svg>
      <svg class="lo-plus" viewBox="0 0 12 12"><path d="M4 0h4v4h4v4H8v4H4V8H0V4h4z" fill="#444"/></svg>
    </div>
    <div class="lo-sheettab">openMSP430_design_constraints</div>
  </div>
</div>
<div class="lo-sash d-flex flex-column"><div class="lo-handle"></div></div>
<div class="lo-deck d-flex flex-column">
  <svg class="lo-dk-menu" viewBox="0 0 12 14"><path d="M1 2h9M1 5h9M1 8h9" stroke="#2b3a66" stroke-width="1.300"/><path d="M6 10h6l-3 3z" fill="#222"/></svg>
  <div class="lo-dk-hr"></div>
  <div class="lo-dk-act"><svg viewBox="0 0 24 24"><path d="M2 6l4-4 2 1-2 3 2 2 3-2 11 11c2 3-2 6-4 3L8 10l-3 2z" fill="#f2f1f0" stroke="#a5a5a3" stroke-width="1.300"/><path d="M17 17l3 3" stroke="#a5a5a3"/></svg></div>
  <div class="lo-dk-i"><svg viewBox="0 0 24 24"><path d="M6 1h17v5h-2l-2-2h-3v16h-6V4H7L6 6z" fill="#555"/><path d="M1 8l20 15H1z" fill="#8ec63f" stroke="#4f8a13"/><path d="M5 16l6 5H5z" fill="#cfe8a5"/></svg></div>
  <div class="lo-dk-i"><svg viewBox="0 0 24 24"><path d="M8 4l4-3 4 3" fill="none" stroke="#7a5a2a"/><rect x="1" y="4" width="22" height="18" rx="2" fill="#e8a33d" stroke="#8a5c1a"/><rect x="4" y="7" width="16" height="12" fill="#f5c25c"/><rect x="4" y="7" width="16" height="6" fill="#6a5a3f"/><path d="M12 17V9M12 11l-3-2M12 11l3-2" stroke="#2d2418"/></svg></div>
  <div class="lo-dk-i"><svg viewBox="0 0 24 24"><circle cx="12" cy="12" r="10.500" fill="#fff" stroke="#9a9a98" stroke-width="2"/><path d="M17 6l-6 4 2 3z" fill="#3f76b8"/><path d="M7 18l4-8 2 3z" fill="#d83a3a"/></svg></div>
  <div class="lo-dk-i"><svg viewBox="0 0 24 24"><text x="11" y="22" text-anchor="middle" font-family="'Liberation Serif',serif" font-style="italic" font-weight="700" font-size="22" fill="#6a3d8a">fx</text><path d="M8 3l1 2 2 .5-1.500 1.500.3 2-1.800-1-1.800 1 .3-2L5 5.500l2-.5zM19 0l1 2 2 .5-1.500 1.500.3 2-1.800-1-1.800 1 .3-2L15 2.500l2-.5z" fill="#e8c81e"/></svg></div>
</div>
</div>

<footer class="lo-status d-flex">
  <div class="lo-st lo-w295 ps-2">Sheet 1 of 1</div>
  <div class="lo-st lo-w294"></div>
  <div class="lo-st lo-w277">Default</div>
  <div class="lo-st lo-w311 text-center">English (India)</div>
  <div class="lo-st lo-w68"></div>
  <div class="lo-st lo-w29a"><svg width="14" height="14" viewBox="0 0 14 14"><rect x="1" y="3" width="8" height="8" fill="#8a8a88"/><path d="M11 2v10M10 2h2M10 12h2" stroke="#8a8a88"/></svg></div>
  <div class="lo-st lo-w29b"><svg width="12" height="14" viewBox="0 0 12 14"><rect x=".5" y="1.500" width="10" height="10" fill="none" stroke="#a5a5a3"/><path d="M3 6l2 3 5-7" fill="none" stroke="#a5a5a3"/></svg></div>
  <div class="lo-st lo-w29b"></div>
  <div class="lo-st lo-w329 text-center">Average: ; Sum: 0</div>
  <div class="lo-slider"><svg width="130" height="16" viewBox="0 0 130 16"><path d="M3 8h8" stroke="#777" stroke-width="2"/><path d="M17 8h97" stroke="#bdbcb9" stroke-width="2"/><path d="M65 2v12" stroke="#a5a5a3" stroke-width="1.500"/><circle cx="74" cy="8" r="4" fill="#fff" stroke="#8a8a88"/><path d="M128 8h-8M124 4v8" stroke="#777" stroke-width="2"/></svg></div>
  <div class="lo-zoom">157%</div>
</footer>
</div>
<script src="https://cdn.jsdelivr.net/npm/bootstrap@5.3.0/dist/js/bootstrap.bundle.min.js"></script>
</body>
</html>
